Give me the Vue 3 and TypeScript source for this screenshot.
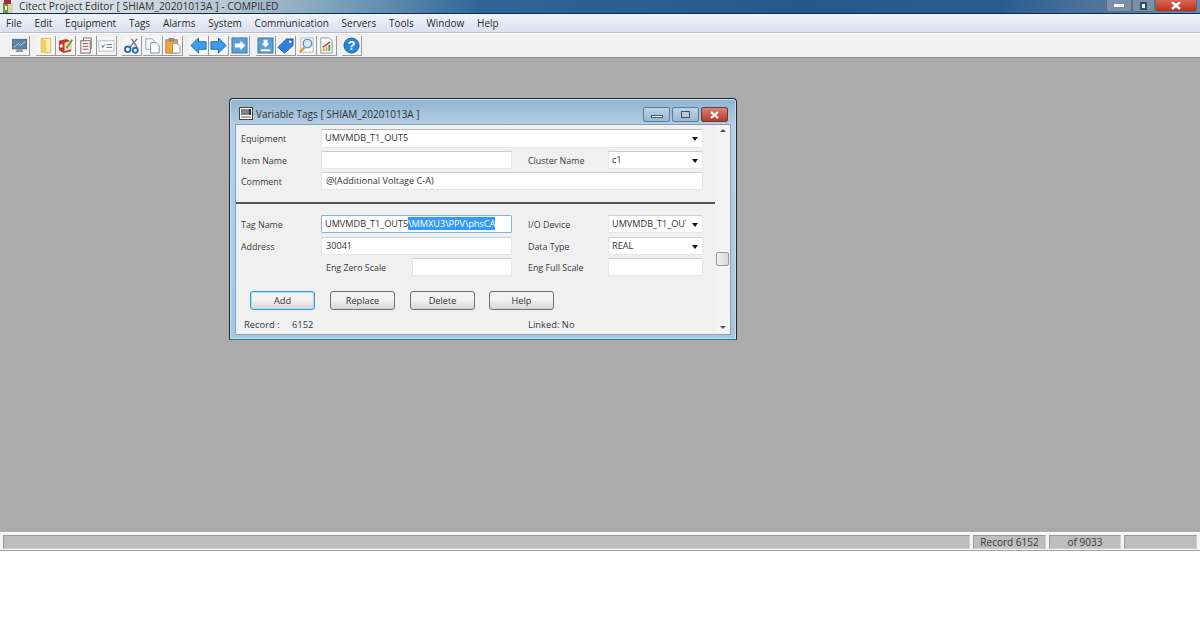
<script setup lang="ts">
const menus = ['File', 'Edit', 'Equipment', 'Tags', 'Alarms', 'System', 'Communication', 'Servers', 'Tools', 'Window', 'Help']
</script>

<template>
  <div class="page">
    <header class="title">
      <svg class="app" width="14" height="13" viewBox="0 0 14 13">
        <rect x="1" y="3" width="5" height="10" fill="#6a9a3a" />
        <rect x="6" y="3" width="5" height="10" fill="#d9d3a0" />
        <rect x="2" y="0" width="7" height="4" fill="#a32a3a" />
        <rect x="3" y="6" width="2" height="4" fill="#fff" />
      </svg>
      <span class="title-text">Citect Project Editor [ SHIAM_20201013A ] - COMPILED</span>
      <div class="caps">
        <div class="cap cap-min"><i></i></div>
        <div class="cap cap-max"><b></b></div>
        <div class="cap cap-close"><svg width="14" height="8" viewBox="0 0 14 8"><path d="M3 0 11 7M11 0 3 7" stroke="#fff" stroke-width="2.4" /></svg></div>
      </div>
    </header>
    <nav class="menu">
      <span v-for="m in menus" :key="m">{{ m }}</span>
    </nav>
    <div class="toolbar">
      <div class="tb-group g0">
        <button class="tb">
          <svg viewBox="0 0 18 18"><rect x="1.5" y="2.5" width="15" height="10" fill="#4f88b5" stroke="#5b6670" /><path d="M3 11 8 7l2 2 5-4" stroke="#f1c27a" fill="none" /><path d="M6 13h6l1 3H5z" fill="#8b97a1" /></svg>
        </button>
      </div>
      <div class="tb-group g1">
        <button class="tb"><svg viewBox="0 0 18 18"><path d="M4.5 1.5h10v15h-10z" fill="#fbeeb8" stroke="#dcb64f" /><path d="M5 2l5 2v13H5z" fill="#f4cf60" /></svg></button>
        <button class="tb"><svg viewBox="0 0 18 18"><path d="M2 4l8-2 5 3v10l-8 2-5-3z" fill="#c0392f" /><path d="M8 6l7-2v9l-7 2z" fill="#e7dcae" /><path d="M3 8h3v3H3z" fill="#fff" /><path d="M10 12l6-9" stroke="#6c9a3a" stroke-width="2" /></svg></button>
        <button class="tb"><svg viewBox="0 0 18 18"><rect x="6" y="1" width="8" height="11" fill="#fff" stroke="#77716a" /><rect x="3" y="4" width="10" height="13" fill="#f7f7f7" stroke="#6f6a64" /><path d="M5 7h6M5 10h6M5 13h6" stroke="#b5403a" /></svg></button>
        <button class="tb"><svg viewBox="0 0 18 18"><rect x="1" y="4" width="16" height="11" fill="#fafafa" stroke="#b9bec4" /><path d="M4 9l1 2 2-3" stroke="#39597e" fill="none" /><path d="M9 8h6M9 11h6" stroke="#5b6d85" /></svg></button>
      </div>
      <div class="tb-group g2">
        <button class="tb"><svg viewBox="0 0 18 18"><path d="M15 2 7 11M9 2l6 9" stroke="#6d7782" stroke-width="1.5" /><circle cx="5" cy="13" r="3" fill="none" stroke="#2e6db2" stroke-width="2" /><circle cx="13" cy="14" r="2.6" fill="none" stroke="#2e6db2" stroke-width="2" /></svg></button>
        <button class="tb"><svg viewBox="0 0 18 18"><path d="M2 2h7l2 3v8H2z" fill="#fff" stroke="#8fa3b8" /><path d="M7 6h6l3 3v8H7z" fill="#fff" stroke="#6f8dae" /></svg></button>
        <button class="tb"><svg viewBox="0 0 18 18"><rect x="2" y="3" width="12" height="14" fill="#f0a63a" stroke="#b27a2e" /><rect x="5" y="1" width="6" height="4" fill="#8a8e94" /><path d="M9 7h5l3 3v7H9z" fill="#fff" stroke="#8296ad" /></svg></button>
      </div>
      <div class="tb-group g3">
        <button class="tb"><svg viewBox="0 0 18 18"><path d="M1 9l8-8v4h8v8H9v4z" fill="#3b9df0" stroke="#1d68b6" /></svg></button>
        <button class="tb"><svg viewBox="0 0 18 18"><path d="M17 9 9 1v4H1v8h8v4z" fill="#3b9df0" stroke="#1d68b6" /></svg></button>
        <button class="tb"><svg viewBox="0 0 18 18"><rect x="1" y="1" width="16" height="16" fill="#5c9fd4" stroke="#3b78ad" /><path d="M15 9 10 4v3H4v4h6v3z" fill="#fff" /></svg></button>
      </div>
      <div class="tb-group g4">
        <button class="tb"><svg viewBox="0 0 18 18"><rect x="1" y="1" width="16" height="16" fill="#5c9fd4" stroke="#3b78ad" /><path d="M9 11 5 7h2V3h4v4h2zM4 13h10v2H4z" fill="#fff" /></svg></button>
        <button class="tb"><svg viewBox="0 0 18 18"><path d="M1 11 10 2h7v7l-9 8z" fill="#2f80d8" stroke="#1a5ca8" /><circle cx="14" cy="5" r="1.4" fill="#fff" /></svg></button>
        <button class="tb"><svg viewBox="0 0 18 18"><rect x="3" y="1" width="13" height="15" fill="#fff" stroke="#aeb8c4" /><circle cx="10" cy="7" r="4.5" fill="#d6e9f8" stroke="#6a8fb2" stroke-width="1.5" /><path d="M7 11 2 16" stroke="#d69a3a" stroke-width="2.5" /></svg></button>
        <button class="tb"><svg viewBox="0 0 18 18"><path d="M3 1h9l3 3v13H3z" fill="#fff" stroke="#8296ad" /><path d="M5 15v-3h2v3zM8 15v-5h2v5z" fill="#d9a53a" /><path d="M11 15v-7h2v7z" fill="#4c9a4a" /><path d="M5 11l8-6" stroke="#c0392f" stroke-width="1.5" /></svg></button>
      </div>
      <div class="tb-group g5">
        <button class="tb"><svg viewBox="0 0 18 18"><circle cx="9" cy="9" r="8" fill="#2b86d8" stroke="#1a5ca8" /><text x="9" y="14" text-anchor="middle" class="help-q">?</text></svg></button>
      </div>
    </div>

    <main class="client">
      <section class="win">
        <div class="win-head">
          <svg class="win-ico" width="14" height="13" viewBox="0 0 14 13"><rect x=".5" y=".5" width="13" height="12" fill="#fff" stroke="#444" /><rect x="2" y="2" width="10" height="6" fill="#333" /><path d="M3 2v6M5 2v6M7 2v6M9 2v6" stroke="#ccc" /><path d="M2 10h10" stroke="#555" /></svg>
          <span class="win-title">Variable Tags [ SHIAM_20201013A ]</span>
          <div class="win-caps">
            <div class="wc wc-min"><i></i></div>
            <div class="wc wc-max"><b></b></div>
            <div class="wc wc-close"><svg width="11" height="8" viewBox="0 0 11 8"><path d="M2 1l7 6M9 1 2 7" stroke="#fff" stroke-width="2.2" /></svg></div>
          </div>
        </div>
        <div class="win-body">
          <div class="form">
            <div class="row r-eq">
              <label class="lab">Equipment</label>
              <div class="field select wide tight">UMVMDB_T1_OUT5<em></em></div>
            </div>
            <div class="row r-item">
              <label class="lab">Item Name</label>
              <div class="field main"></div>
              <label class="lab lab2">Cluster Name</label>
              <div class="field select side tight">c1<em></em></div>
            </div>
            <div class="row r-com">
              <label class="lab">Comment</label>
              <div class="field wide">@(Additional Voltage C-A)</div>
            </div>
            <hr class="divider" />
            <div class="row r-tag">
              <label class="lab">Tag Name</label>
              <div class="field main focus tight">UMVMDB_T1_OUT5<span class="sel">\MMXU3\PPV\phsCA</span></div>
              <label class="lab lab2">I/O Device</label>
              <div class="field select side tight"><span class="clip">UMVMDB_T1_OUT</span><em></em></div>
            </div>
            <div class="row r-addr">
              <label class="lab">Address</label>
              <div class="field main">30041</div>
              <label class="lab lab2">Data Type</label>
              <div class="field select side tight">REAL<em></em></div>
            </div>
            <div class="row r-eng">
              <label class="lab lab-eng">Eng Zero Scale</label>
              <div class="field zero"></div>
              <label class="lab lab2">Eng Full Scale</label>
              <div class="field side"></div>
            </div>
            <div class="btns">
              <button class="btn def">Add</button>
              <button class="btn">Replace</button>
              <button class="btn">Delete</button>
              <button class="btn btn-help">Help</button>
            </div>
            <div class="rec">
              <span class="rec-a">Record :</span>
              <span class="rec-b">6152</span>
              <span class="rec-c">Linked: No</span>
            </div>
          </div>
          <aside class="scroll">
            <span class="arrow up"></span>
            <span class="thumb"></span>
            <span class="arrow down"></span>
          </aside>
        </div>
      </section>
    </main>

    <footer class="status">
      <div class="pane grow"></div>
      <div class="pane p1">Record 6152</div>
      <div class="pane p2">of 9033</div>
      <div class="pane p3"></div>
    </footer>
  </div>
</template>

<style>
html, body { margin: 0; background: #fff; }
</style>

<style scoped>
.page {
  width: 1200px;
  height: 630px;
  overflow: hidden;
  background: #fff;
  display: flex;
  flex-direction: column;
  font-family: "Open Sans", "Noto Sans", sans-serif;
  color: #333;
}
.title {
  height: 13px;
  flex: none;
  display: flex;
  align-items: center;
  position: relative;
  overflow: hidden;
  background: linear-gradient(90deg, #e2e8ea 0, #d3dde2 110px, #b4c6d1 230px, #7fa3bc 330px, #2f6596 480px, #27578c 800px, #2a5b90 1000px, #4d7399 1090px, #6e8ba8 1200px);
  border-bottom: 1px solid #0a2c5c;
}
.app { margin-left: 2px; flex: none; }
.title-text { margin-left: 3px; font-size: 10.3px; color: #333; white-space: nowrap; line-height: 13px; }
.caps { position: absolute; right: 3px; top: 0; display: flex; height: 12px; }
.cap { border: 1px solid #5d6f82; border-top: 0; border-radius: 0 0 3px 3px; display: flex; align-items: center; justify-content: center; box-sizing: border-box; }
.cap-min { width: 26px; background: #7b90a8; }
.cap-min i { width: 10px; height: 3px; background: #fff; }
.cap-max { width: 23px; background: #7b90a8; }
.cap-max b { width: 7px; height: 8px; background: #fff; border: 2px solid #2f4d72; box-sizing: border-box; }
.cap-close { width: 42px; background: linear-gradient(#d66a58, #b8301f); }
.menu {
  height: 18px;
  flex: none;
  display: flex;
  align-items: center;
  padding-left: 6px;
  gap: 12.75px;
  font-size: 10px;
  color: #2a2a2a;
  background: linear-gradient(#f0f3fb, #dbe0ef);
  border-bottom: 1px solid #b9bcc4;
}
.toolbar {
  height: 23px;
  flex: none;
  display: flex;
  align-items: center;
  background: #f0f0f0;
  border-top: 1px solid #fff;
  border-bottom: 1px solid #8b8b8b;
  padding-left: 10px;
  box-sizing: content-box;
}
.tb-group { display: flex; gap: 0.4px; }
.g1 { margin-left: 6px; }
.g2, .g5 { margin-left: 5px; }
.g3, .g4 { margin-left: 6px; }
.tb {
  width: 20px;
  height: 20px;
  padding: 1px;
  margin: 0;
  background: #f4f4f4;
  border: 0;
  border-right: 1px solid #9a9a9a;
  border-bottom: 1px solid #9a9a9a;
  box-sizing: border-box;
  display: flex;
}
.tb svg { width: 100%; height: 100%; display: block; }
.help-q { fill: #fff; font: bold 13px "Liberation Sans", sans-serif; }
.client {
  flex: none;
  height: 474px;
  background: #ababab;
  position: relative;
}
.win {
  position: absolute;
  left: 229px;
  top: 40px;
  width: 508px;
  height: 242px;
  box-sizing: border-box;
  border: 1px solid #1d2a35;
  border-radius: 4px 4px 0 0;
  background: linear-gradient(#8fb3d2, #b6cfe4 27px, #a9c8e0);
  box-shadow: inset 0 0 0 1px #c4dcee;
  padding: 0 6px 5px;
  display: flex;
  flex-direction: column;
  border-bottom-color: #0f7f9e;
}
.win-head { height: 26px; flex: none; display: flex; align-items: center; position: relative; }
.win-ico { margin: 3px 0 0 3px; }
.win-title { margin: 3px 0 0 3px; font-size: 10px; color: #333; white-space: nowrap; }
.win-caps { position: absolute; right: 2px; top: 8px; display: flex; gap: 2px; }
.wc { height: 15px; box-sizing: border-box; border: 1px solid #5d7c99; border-radius: 2px; display: flex; align-items: center; justify-content: center; }
.wc-min { width: 27px; background: linear-gradient(#bcd2e6, #9ab8d2); }
.wc-min i { width: 10px; height: 1px; margin-top: 4px; background: #fff; border: 1px solid #456; box-sizing: content-box; }
.wc-max { width: 27px; background: linear-gradient(#bcd2e6, #9ab8d2); }
.wc-max b { width: 9px; height: 7px; border: 1px solid #456; background: #b9c9d8; box-sizing: border-box; }
.wc-close { width: 27px; background: linear-gradient(#d9826f, #b63c2a); border-color: #6d3a36; }
.win-body { flex: 1; min-height: 0; background: #f0f0f0; display: flex; outline: 1px solid #8aa0b4; }
.form { width: 480px; flex: none; padding-left: 5px; box-sizing: border-box; font-size: 9.4px; color: #3a3a3a; }
.row { display: flex; align-items: center; }
.lab { width: 80px; flex: none; white-space: nowrap; font-size: 8.9px; }
.lab2 { width: 80px; margin-left: 16px; }
.lab-eng { width: 171px; padding-left: 85px; box-sizing: border-box; margin-left: 0; }
.field {
  box-sizing: border-box;
  height: 18px;
  background: #fff;
  border: 1px solid #e6e6e6;
  border-top-color: #cfcfcf;
  border-radius: 1px;
  padding-left: 4px;
  line-height: 16px;
  font-size: 9.15px;
  color: #333;
  white-space: nowrap;
  overflow: hidden;
  position: relative;
}
.tight { padding-left: 3px; }
.wide { width: 382px; }
.main { width: 191px; }
.side { width: 95px; }
.zero { width: 100px; }
.select em {
  position: absolute;
  right: 4px;
  top: 7px;
  width: 0;
  height: 0;
  border: 3.5px solid transparent;
  border-top: 4px solid #111;
  border-bottom: 0;
}
.clip { display: inline-block; width: 74px; overflow: hidden; vertical-align: top; }
.r-eq { margin-top: 4px; }
.r-eq .field { height: 19px; border-top-color: #b5b5b5; }
.r-item { margin-top: 3px; }
.r-com { margin-top: 3px; }
.divider { margin: 12px 0 0 -5px; width: 479px; height: 2px; border: 0; background: #555; }
.r-tag { margin-top: 11px; }
.focus { border-color: #7eb4de; }
.sel { background: #3399ff; color: #fff; }
.r-addr { margin-top: 4px; }
.r-eng { margin-top: 3px; }
.btns { display: flex; gap: 15px; margin: 15px 0 0 9px; }
.btn {
  width: 65px;
  height: 19px;
  padding: 0;
  border: 1px solid #707070;
  border-radius: 3px;
  background: linear-gradient(#f2f2f2 45%, #d6d6d6);
  font: 9.2px "Open Sans", "Noto Sans", sans-serif;
  color: #333;
}
.btn-help { margin-left: -1px; }
.def { border-color: #3a9cc4; box-shadow: inset 0 0 0 1px #a5e0f3; }
.rec { display: flex; margin: 8px 0 0 3px; line-height: 14px; }
.rec-a { width: 48px; }
.rec-b { width: 236px; }
.scroll {
  width: 14px;
  flex: none;
  background: #f4f4f4;
  position: relative;
}
.arrow { position: absolute; left: 4px; width: 0; height: 0; border: 3px solid transparent; }
.up { top: 4px; border-bottom: 3px solid #555; border-top: 0; }
.down { bottom: 5px; border-top: 3px solid #555; border-bottom: 0; }
.thumb {
  position: absolute;
  left: 0;
  top: 127px;
  width: 13px;
  height: 14px;
  box-sizing: border-box;
  border: 1px solid #999;
  border-radius: 2px;
  background: linear-gradient(90deg, #f0f0f0, #d8d8d8);
}
.status {
  flex: none;
  height: 19px;
  box-sizing: border-box;
  background: #f4f4f4;
  border-top: 1px solid #fff;
  display: flex;
  gap: 3px;
  padding: 2px 3px 0 3px;
  border-bottom: 1px solid #9aa7b5;
}
.pane {
  height: 14px;
  box-sizing: border-box;
  background: #bdbdbd;
  border: 1px solid #9a9a9a;
  border-bottom-color: #cfcfcf;
  border-right-color: #cfcfcf;
  font-size: 10px;
  line-height: 12px;
  color: #3a3a3a;
  text-align: center;
}
.grow { flex: 1; }
.p1 { width: 73px; }
.p2 { width: 72px; }
.p3 { width: 73px; }
</style>
